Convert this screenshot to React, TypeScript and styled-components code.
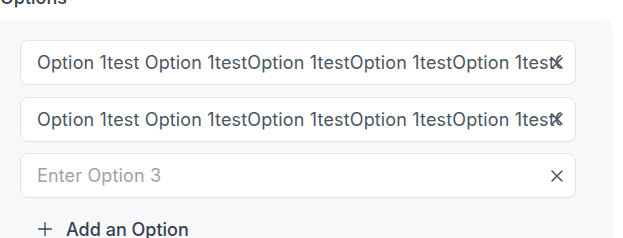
import * as React from 'react';
import styled, { createGlobalStyle } from 'styled-components';
import { Plus } from 'lucide-react';

const GlobalStyle = createGlobalStyle`
	body {
		margin: 0;
		background: #ffffff;
		font-family: Inter, 'Noto Sans', sans-serif;
		overflow: hidden;
	}
`;

const Wrapper = styled.div`
	display: flex;
	flex-direction: column;
	margin-top: -16px;
`;

const Label = styled.div`
	font-size: 18px;
	line-height: 27px;
	font-weight: 500;
	color: #374151;
	margin-bottom: 7.5px;
`;

const Panel = styled.div`
	display: flex;
	flex-direction: column;
	gap: 11.5px;
	margin-left: -17px;
	width: 630px;
	box-sizing: border-box;
	padding: 21.5px 37px 40px 37px;
	background: #f7f8f9;
	border-radius: 10px;
`;

const Field = styled.div`
	position: relative;
	height: 45px;
`;

const Input = styled.input`
	width: 100%;
	height: 100%;
	box-sizing: border-box;
	padding: 0 14px 0 16px;
	border: 1px solid #e3e5e8;
	border-radius: 8px;
	background: #ffffff;
	font-family: Inter, 'Noto Sans', sans-serif;
	font-size: 18px;
	letter-spacing: 0.15px;
	color: #4b5563;
	outline: none;
	&::placeholder {
		color: #9ca3af;
	}
`;

const RemoveButton = styled.button`
	position: absolute;
	right: 13px;
	top: 50%;
	transform: translateY(-50%);
	display: flex;
	padding: 0;
	border: none;
	background: transparent;
	color: #4b5563;
	cursor: pointer;
`;

const AddButton = styled.button`
	display: flex;
	align-items: center;
	gap: 10.5px;
	margin-top: 6px;
	padding: 0 0 0 13.5px;
	border: none;
	background: transparent;
	font-family: Inter, 'Noto Sans', sans-serif;
	font-size: 18px;
	line-height: 27px;
	font-weight: 500;
	color: #374151;
	cursor: pointer;
`;

const CrossIcon: React.FC = () => (
	<svg width="12" height="12" viewBox="0 0 12 12" fill="none">
		<path d="M1 1L11 11M11 1L1 11" stroke="currentColor" strokeWidth="1.6" strokeLinecap="round" />
	</svg>
);

interface IOption {
	value: string;
	placeholder: string;
}

const longText = 'Option 1test Option 1testOption 1testOption 1testOption 1testOption 1test';

const options: IOption[] = [
	{ value: longText, placeholder: 'Enter Option 1' },
	{ value: longText, placeholder: 'Enter Option 2' },
	{ value: '', placeholder: 'Enter Option 3' },
];

const App: React.FC = () => (
	<>
		<GlobalStyle />
		<Wrapper>
			<Label>Options</Label>
			<Panel>
				{options.map((option, index) => (
					<Field key={index}>
						<Input defaultValue={option.value} placeholder={option.placeholder} />
						<RemoveButton type="button">
							<CrossIcon />
						</RemoveButton>
					</Field>
				))}
				<AddButton type="button">
					<Plus size={22} strokeWidth={1.4} />
					Add an Option
				</AddButton>
			</Panel>
		</Wrapper>
	</>
);

export default App;
